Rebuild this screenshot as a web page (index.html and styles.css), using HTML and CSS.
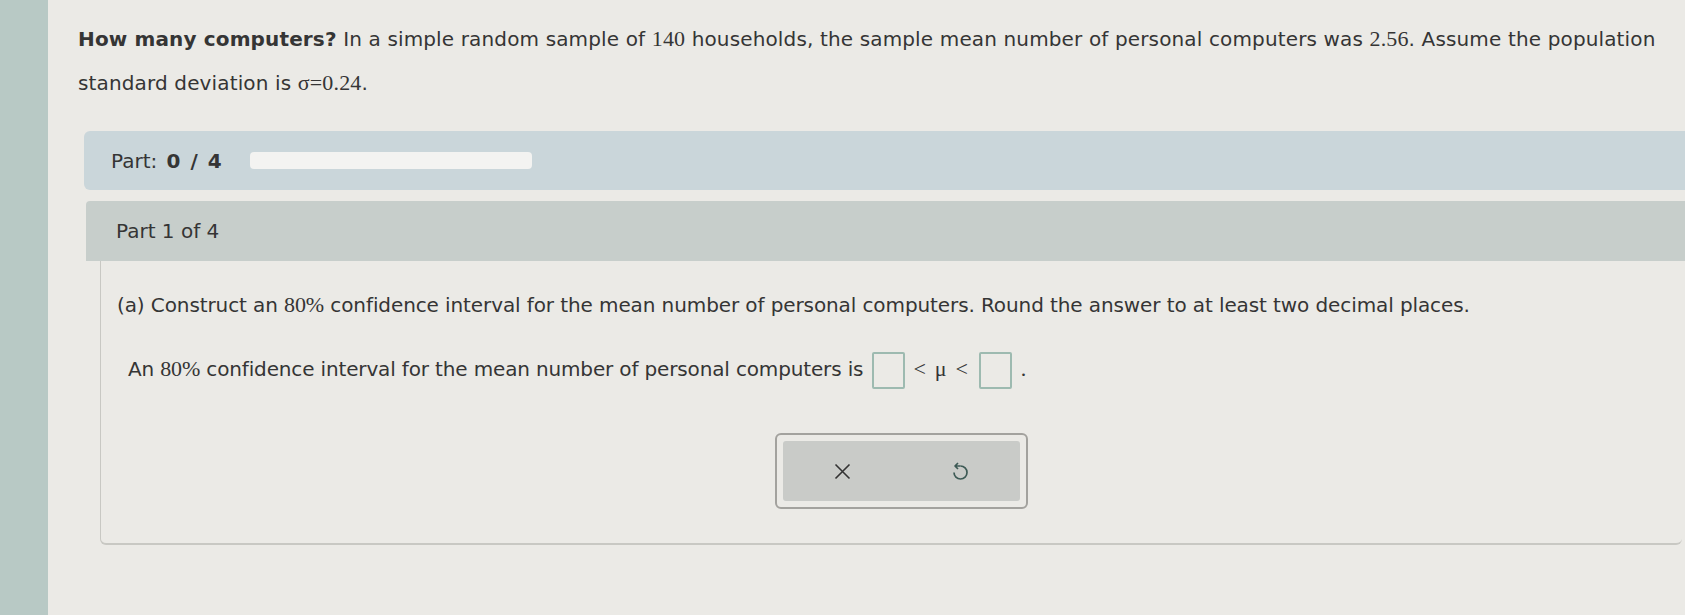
FILE: index.html
```html
<!DOCTYPE html>
<html lang="en">
<head>
  <meta charset="UTF-8" />
  <title>How many computers?</title>
  <link rel="stylesheet" href="styles.css">
</head>
<body>
  <div class="page">
    <aside class="rail"></aside>

    <main class="content">
      <p class="question">
        <b>How many computers?</b> In a simple random sample of <span class="num">140</span> households, the sample mean number of personal computers was <span class="num">2.56</span>. Assume the population standard deviation is <span class="num">σ=0.24</span>.
      </p>

      <div class="progress">
        <span class="progress-label">Part: <b>0 / 4</b></span>
        <div class="track"></div>
      </div>

      <section class="part">
        <div class="part-head">Part 1 of 4</div>

        <div class="part-body">
          <p class="prompt">(a) Construct an <span class="num">80%</span> confidence interval for the mean number of personal computers. Round the answer to at least two decimal places.</p>

          <p class="answer">An <span class="num">80%</span> confidence interval for the mean number of personal computers is <span class="box"></span><span class="rel">&lt;</span><span class="num mu">μ</span><span class="rel">&lt;</span><span class="box"></span><span class="dot">.</span></p>

          <div class="tools">
            <div class="tools-inner">
              <button class="tool" title="Clear">
                <svg width="17" height="17" viewBox="0 0 17 17">
                  <path d="M1.5 1.5 L15.5 15.5 M15.5 1.5 L1.5 15.5" stroke="#333" stroke-width="1.6" fill="none" />
                </svg>
              </button>
              <button class="tool" title="Undo">
                <svg width="17" height="19" viewBox="0 0 17 19">
                  <path d="M8.5 4 A6.5 6.5 0 1 1 2 10.5" stroke="#3d5a55" stroke-width="1.7" fill="none" />
                  <path d="M8.5 4 L3 4 M6 1 L3 4 L6 7" stroke="#3d5a55" stroke-width="1.7" fill="none" stroke-linejoin="round" />
                </svg>
              </button>
            </div>
          </div>
        </div>
      </section>
    </main>
  </div>
</body>
</html>
```

FILE: styles.css
```css
body {
  margin: 0;
  background: #ebeae6;
  font-family: 'DejaVu Sans', Verdana, sans-serif;
  color: #353535;
}

.page {
  display: flex;
  min-height: 615px;
  overflow: hidden;
}

.rail {
  width: 48px;
  flex-shrink: 0;
  background: #b8c9c5;
}

.content {
  flex: 1;
  padding: 17px 0 0 30px;
}

.question {
  margin: 0;
  font-size: 20px;
  line-height: 44px;
  letter-spacing: 0.14px;
  padding-right: 20px;
}

.num {
  font-family: 'Liberation Serif', 'Times New Roman', serif;
  font-size: 22px;
  line-height: 1;
}

.progress {
  margin: 26px 0 0 6px;
  height: 59px;
  display: flex;
  align-items: center;
  background: #cad6da;
  border-radius: 6px 0 0 6px;
  padding-left: 27px;
  font-size: 20px;
}

.progress-label b {
  margin-left: 3px;
  word-spacing: 3px;
}

.track {
  width: 282px;
  height: 17px;
  margin-left: 28px;
  background: #f3f3f1;
  border-radius: 4px;
}

.part {
  margin: 11px 0 0 8px;
}

.part-head {
  height: 60px;
  display: flex;
  align-items: center;
  padding-left: 30px;
  background: #c7cecb;
  border-radius: 4px 0 0 0;
  font-size: 20px;
}

.part-body {
  margin: 0 3px 0 14px;
  padding: 31px 0 34px 16px;
  border-left: 1px solid #c8c8c3;
  border-bottom: 2px solid #c8c8c3;
  border-radius: 0 0 6px 6px;
}

.prompt {
  margin: 0;
  font-size: 20px;
  line-height: 26px;
  letter-spacing: -0.1px;
}

.answer {
  margin: 31px 0 0 11px;
  font-size: 20px;
  line-height: 40px;
  letter-spacing: -0.15px;
}

.box {
  display: inline-block;
  width: 29px;
  height: 33px;
  border: 2px solid #9dbab0;
  border-radius: 2px;
  vertical-align: middle;
  margin-left: 2px;
}

.rel {
  font-family: 'Liberation Serif', serif;
  font-size: 22px;
  margin: 0 9px;
}

.mu {
  font-size: 22px;
}

.dot {
  font-family: 'Liberation Serif', serif;
  font-size: 22px;
  margin-left: 9px;
}

.tools {
  margin: 44px 0 0 658px;
  width: 253px;
  padding: 6px;
  border: 2px solid #a3a29e;
  border-radius: 6px;
  box-sizing: border-box;
}

.tools-inner {
  display: flex;
  height: 60px;
  background: #c9cbc8;
  border-radius: 3px;
}

.tool {
  flex: 1;
  border: none;
  background: none;
  display: flex;
  align-items: center;
  justify-content: center;
  cursor: pointer;
}
```
